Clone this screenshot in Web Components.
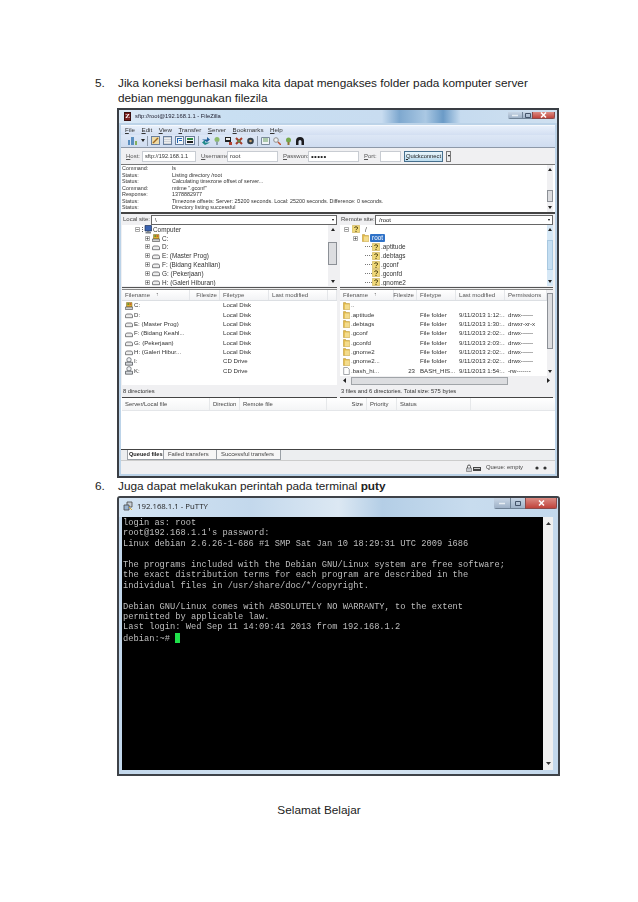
<!DOCTYPE html>
<html lang="id"><head><meta charset="utf-8"><title>Selamat Belajar</title>
<style>html,body{margin:0;background:#fff}</style>
</head><body>
<doc-page>
  <doc-item n="5.">Jika koneksi berhasil maka kita dapat mengakses folder pada komputer server<br>debian menggunakan filezila</doc-item>
  <fz-window></fz-window>
  <doc-item class="second" n="6.">Juga dapat melakukan perintah pada terminal <b>puty</b></doc-item>
  <putty-window></putty-window>
  <doc-foot>Selamat Belajar</doc-foot>
</doc-page>
<script>
const def=(name,html,extra)=>customElements.define(name,class extends HTMLElement{
  constructor(){super();this.attachShadow({mode:'open'}).innerHTML=typeof html==='function'?html(this):html;}
  connectedCallback(){ if(extra) extra(this); }
});
const ico={
 folder:`<svg width="7" height="8" viewBox="0 0 7 8"><path d="M.4.600h2.200l.6 1h3.400v6H.4z" fill="#e4bb48" stroke="#b08c30" stroke-width=".5"/><path d="M1.800 2.400h4.800v5H1.800z" fill="#f3dc8e"/></svg>`,
 qfolder:`<svg width="8" height="8" viewBox="0 0 8 8"><path d="M.3.500h7.400v7H.3z" fill="#f0d878" stroke="#c0a040" stroke-width=".5"/><path d="M2.400 2.700c.3-1.200 3.300-1.200 3.300.3 0 1.100-1.700 1-1.700 2.200M4 6v1" fill="none" stroke="#453a10" stroke-width="1"/></svg>`,
 drive:`<svg width="8" height="8" viewBox="0 0 8 8"><path d="M.5 4.300 1.500 3h5l1 1.300v2.400H.5z" fill="#ececec" stroke="#4a4c50" stroke-width=".7"/></svg>`,
 sys:`<svg width="8" height="8" viewBox="0 0 8 8"><path d="M1.500.500h5.500v4.500H1.500z" fill="#e0b030" stroke="#7a6420" stroke-width=".5"/><path d="M2.400 1.300h1.700v1.500H2.400z" fill="#3f8f3a"/><path d="M4.500 1.300h1.700v1.500H4.500z" fill="#c05030"/><path d="M.4 5h7.200v2.500H.4z" fill="#d0d0d0" stroke="#444" stroke-width=".6"/></svg>`,
 cd:`<svg width="8" height="9" viewBox="0 0 8 9"><circle cx="4" cy="2.800" r="2.200" fill="#eef0f3" stroke="#555a60" stroke-width=".7"/><path d="M.5 5.200h7v3h-7z" fill="#d5d8dc" stroke="#44474c" stroke-width=".7"/></svg>`,
 comp:`<svg width="10" height="9" viewBox="0 0 10 9"><path d="M3 .5h6.500v5.500H3z" fill="#3a62b0" stroke="#1d2f58" stroke-width=".7"/><path d="M5 6h2.500v1H9v1.500H3.500V7H5z" fill="#7d838a"/><path d="M.5 2v6" stroke="#666" stroke-width="1" stroke-dasharray="1 1"/></svg>`,
 file:`<svg width="7" height="8" viewBox="0 0 7 8"><path d="M.7.500h3.800l1.800 1.800v5.200H.7z" fill="#fff" stroke="#80848a" stroke-width=".7"/></svg>`,
 plus:`<svg width="5" height="5" viewBox="0 0 5 5"><path d="M.5.500h4v4h-4z" fill="#fff" stroke="#888" stroke-width=".7"/><path d="M1.200 2.500h2.600M2.500 1.200v2.600" stroke="#333" stroke-width=".6"/></svg>`,
 minus:`<svg width="5" height="5" viewBox="0 0 5 5"><path d="M.5.500h4v4h-4z" fill="#fff" stroke="#888" stroke-width=".7"/><path d="M1.200 2.500h2.600" stroke="#333" stroke-width=".6"/></svg>`
};

def('doc-page',`<style>:host{display:block;width:638px;height:902px;box-sizing:border-box;padding:76px 0 0 117px;font:11.800px/15.300px "Liberation Sans",Arial,sans-serif;color:#222;background:#fff;overflow:hidden}</style><slot></slot>`);
def('doc-item',h=>`<style>:host{display:block;position:relative;width:440px;margin-left:1px;height:32px;white-space:nowrap}
:host(.second){height:17px;margin-top:1px}
.n{position:absolute;left:-23px;top:0}</style><span class="n">${h.getAttribute('n')}</span><slot></slot>`);
def('doc-foot',`<style>:host{display:block;width:404px;margin-top:25px;text-align:center;line-height:19px}</style><slot></slot>`);

def('win-buttons',`<style>:host{display:flex;align-items:stretch;height:7px;overflow:hidden;border-radius:0 0 2px 2px}
i{display:flex;align-items:center;justify-content:center;width:var(--bw,16px);background:linear-gradient(#c8d6e6,#9fb2c8);border:1px solid #6f8296;box-sizing:border-box;border-top:0;margin-left:-1px}
i.m{width:var(--bm,11px)}
i.x{width:var(--bx,23px);background:linear-gradient(#dc8c84,#c0443c);border-color:#8a4a4a}
svg{display:block}</style>
<i><svg width="6" height="3"><path d="M0 1.500h6" stroke="#e8eef4" stroke-width="1.500"/></svg></i><i class="m"><svg width="6" height="5"><path d="M.5.500h5v4h-5z" fill="none" stroke="#44546a"/></svg></i><i class="x"><svg width="7" height="6"><path d="m1 .5 5 5m0-5-5 5" stroke="#fff" stroke-width="1.500"/></svg></i>`);

def('fz-title',`<style>:host{display:flex;align-items:center;height:13px;padding:0 0 0 2px;background:linear-gradient(90deg,#dbe9f6 0,#c9dff2 25%,#c8dcf0 60%,#7ea8cf 64%,#aac8e3 70%,#6b9bc7 74%,#c6dbef 78%,#cfe0f0 100%);font-size:5.800px;color:#223;margin:0 -2px 2px}
.logo{width:7px;height:9px;background:#7a1d1d;border:1px solid #3a1010;box-sizing:border-box;color:#fff;font:bold 7px/7px "Liberation Serif",serif;text-align:center;margin:0 4px 0 3px}
span{flex:1;white-space:nowrap}win-buttons{align-self:flex-start;margin:2px 2px 0 0}</style><div class="logo">Z</div><span>sftp://root@192.168.1.1 - FileZilla</span><win-buttons></win-buttons>`);

def('fz-menu',`<style>:host{display:flex;align-items:center;gap:6.500px;height:10px;padding:0 0 0 4px;background:linear-gradient(#e8f0fb,#d3dff2);border-top:1px solid #f6f9fd;box-sizing:border-box;font-size:6.200px;color:#333}
u{text-decoration:underline}</style><span><u>F</u>ile</span><span><u>E</u>dit</span><span><u>V</u>iew</span><span><u>T</u>ransfer</span><span><u>S</u>erver</span><span><u>B</u>ookmarks</span><span><u>H</u>elp</span>`);

def('fz-toolbar',`<style>:host{display:flex;align-items:center;height:13px;padding:0 0 1px 4px;box-sizing:border-box;background:linear-gradient(#dde7f6,#cfdcf0);border-bottom:1px solid #8d98a8}
:host>*{flex:none}
svg,.b{display:block;margin-left:3px}
svg:first-child{margin-left:0}
.b{width:9px;height:9px;border:1px solid #6a7f9c;box-sizing:border-box;background:#e6e6e0}
.s{display:block;width:1px;height:10px;background:#8e9aaa;margin-left:2px}</style>
<svg width="9" height="9"><path d="M0 4h2v5H0zM3 1h3v8H3z" fill="#5b8fc0"/><path d="M7 5h2v4H7z" fill="#84b060"/></svg>
<svg width="4" height="3" style="margin-left:4px"><path d="M0 0h4L2 3z" fill="#222"/></svg><span class="s"></span>
<span class="b" style="background:#eedba8"><svg width="7" height="7" style="margin:0"><path d="M1 6 6 1" stroke="#a06a20" stroke-width="1.500"/></svg></span>
<span class="b" style="background:repeating-linear-gradient(#cfd2d6 0 1px,#eceded 1px 2px)"></span>
<span class="b" style="margin-left:3px;background:#f2f4f8"><svg width="7" height="7" style="margin:0"><path d="M1 1h5v1H2v4H1z" fill="#2066b0"/><path d="M3 3h3v1H3z" fill="#2066b0"/></svg></span>
<span class="b" style="margin-left:1px;width:10px;background:#f2f4f8"><svg width="8" height="7" style="margin:0"><path d="M1 1h6v2H1z" fill="#2d8a42"/><path d="M1 4h6v2H1z" fill="#222"/></svg></span>
<span class="s" style="margin-left:3px"></span>
<svg width="8" height="8"><path d="M0 2.500h5V0l3 2.500-3 2.500z" fill="#1f5f9a"/><path d="M8 5.500H3V3L0 5.500 3 8z" fill="#1f8a8a"/></svg>
<svg width="8" height="9"><circle cx="4" cy="3.500" r="2.500" fill="#8cbc6c"/><path d="M3 5.500h2V9H3z" fill="#8da0b0"/></svg>
<svg width="8" height="8"><path d="M1 0h6v5H1z" fill="#222"/><path d="M2 1h4v2H2z" fill="#eee"/><path d="M5 5h3v3H5z" fill="#b04030"/></svg>
<svg width="8" height="8"><path d="M1 1 7 7M7 1 1 7" stroke="#a53b2a" stroke-width="2"/><circle cx="4" cy="4" r="1.600" fill="#5d8a48"/></svg>
<svg width="9" height="8"><circle cx="4.500" cy="4" r="3.300" fill="#33404c"/><circle cx="4.500" cy="4" r="1.300" fill="#c8a06a"/></svg>
<span class="s"></span>
<svg width="9" height="8"><path d="M.5.500h8v7h-8z" fill="#eef2f6" stroke="#7c8c9c"/><path d="M2 2h5M2 4h5" stroke="#6aa060"/></svg>
<svg width="8" height="8"><circle cx="3" cy="3" r="2.300" fill="#f0f0f0" stroke="#909090"/><path d="M5 5l3 3" stroke="#c05030" stroke-width="1.500"/></svg>
<svg width="7" height="8" style="margin-left:4px"><circle cx="3.500" cy="3" r="2.500" fill="#74a84c"/><path d="M2.500 5h2v3h-2z" fill="#907038"/></svg>
<svg width="8" height="8" style="margin-left:4px"><path d="M0 8V4a4 4 0 0 1 8 0v4H5.500V4.500a1.500 1.500 0 0 0-3 0V8z" fill="#1c1c20"/></svg>`);

def('fz-quick',`<style>:host{display:grid;grid-template-columns:16px 54px 31px 51px 30px 51px 21px 21px 42px 8px;align-items:center;height:17px;padding:0 0 0 5px;box-sizing:border-box;background:#f0f0f2;font-size:6px;color:#555;border-bottom:1px solid #777;white-space:nowrap}
.in{height:11px;background:#fff;border:1px solid #c8ccd2;box-sizing:border-box;display:block;line-height:9px;padding-left:2px;color:#333;overflow:hidden}
.host{font-size:5.600px}
.btn{border:1px solid #47708e;background:linear-gradient(#e9f6fc,#bbdcee);height:11px;line-height:9px;text-align:center;box-sizing:border-box;color:#222;margin-left:3px;font-size:5.800px}
.dd{height:11px;border:1px solid #777;box-sizing:border-box;margin-left:3px;width:5px;background:#eee;position:relative}
.dd:after{content:"";position:absolute;left:.5px;top:3px;border:solid transparent;border-width:2px 1px 0;border-top-color:#000}
.l{margin-left:5px}
u{text-decoration:underline}</style>
<span><u>H</u>ost:</span><span class="in host">sftp://192.168.1.1</span><span class="l"><u>U</u>sername:</span><span class="in">root</span><span class="l"><u>P</u>assword:</span><span class="in" style="letter-spacing:.3px;font-size:8px;color:#222">•••••</span><span class="l"><u>P</u>ort:</span><span class="in"></span><span class="btn"><u>Q</u>uickconnect</span><span class="dd"></span>`);

const scroll=()=>`<div class="sb"><svg width="4" height="3"><path d="M0 3 2 0 4 3z" fill="#222"/></svg><div class="th"></div><svg width="4" height="3"><path d="M0 0h4L2 3z" fill="#222"/></svg></div>`;
const sbCss=`.sb{width:6px;flex:none;background:#f0f0f2;display:flex;flex-direction:column;align-items:center;padding:3px 0;box-sizing:border-box;position:relative}.th{position:absolute;left:0;right:0;background:#dcdde0;border:1px solid #8c9096;box-sizing:border-box}.sb svg{display:block}.sb svg:last-child{margin-top:auto}`;

def('fz-log',`<style>:host{display:flex;height:49px;background:#fff;font-size:5.400px;line-height:6.500px;color:#333;border-bottom:2px solid #444;padding:0 2px 0 1px;box-sizing:border-box}
.t{flex:1;display:grid;grid-template-columns:50px 1fr;align-content:start;white-space:nowrap}
${sbCss}.th{top:25px;height:12px}</style>
<div class="t"><span>Command:</span><span>ls</span><span>Status:</span><span>Listing directory /root</span><span>Status:</span><span>Calculating timezone offset of server...</span><span>Command:</span><span>mtime ".gconf"</span><span>Response:</span><span>1378882977</span><span>Status:</span><span>Timezone offsets: Server: 25200 seconds. Local: 25200 seconds. Difference: 0 seconds.</span><span>Status:</span><span>Directory listing successful</span></div>${scroll()}`);

def('fz-sitebar',h=>`<style>:host{display:grid;grid-template-columns:var(--lab) 1fr;align-items:center;height:11px;font-size:6px;color:#444;background:#f0f0f2;white-space:nowrap}
span{padding-left:1px}
.in{background:#fff;height:10px;border:1px solid #666;box-sizing:border-box;line-height:8px;padding-left:3px;color:#222;position:relative}
.in:after{content:"";position:absolute;right:2px;top:3px;border:solid transparent;border-width:2px 1.500px 0;border-top-color:#000}</style><span>${h.getAttribute('label')}</span><span class="in">${h.getAttribute('value')}</span>`);

def('fz-tree',`<style>:host{display:flex;height:61px;background:#fff;font-size:6.400px;color:#333;overflow:hidden}
.t{flex:1;min-width:0}
.r{display:flex;align-items:center;height:8.800px;white-space:nowrap}
svg{display:block;flex:none}
${sbCss}
:host(:not([remote])) .sb{width:9px}
:host(:not([remote])) .th{top:17px;height:23px}
:host([remote]) .sb{background:#d6e8f6}
:host([remote]) .th{top:15px;height:30px;background:#c4def2;border-color:#a8c8e0}
.sel{background:#2f72c8;color:#fff;padding:0 2px;border-radius:1px;display:block;line-height:8px}
.cn{display:block;width:7px;height:0;border-top:1px dotted #777;flex:none}
#s{display:contents}</style><div class="t" id="t"></div><div id="s"></div>`,
h=>{const T=h.shadowRoot.getElementById('t');const remote=h.hasAttribute('remote');
 const cell=(pad,a,ag,b,bg,t)=>`<div class="r" style="padding-left:${pad}px">${a}<span style="width:${ag}px;flex:none"></span>${b}<span style="width:${bg}px;flex:none"></span><span>${t}</span></div>`;
 const rows=remote?[cell(4,ico.minus,3,ico.qfolder,5,'/'),cell(13,ico.plus,4,ico.folder,1,'<span class="sel">root</span>'),...['.aptitude','.debtags','.gconf','.gconfd','.gnome2'].map(n=>cell(25,'<i class="cn"></i>',0,ico.qfolder,1,n))]
 :[cell(13,ico.minus,2,ico.comp,1,'Computer'),...[[ico.sys,'C:'],[ico.drive,'D:'],[ico.drive,'E: (Master Prog)'],[ico.drive,'F: (Bidang Keahlian)'],[ico.drive,'G: (Pekerjaan)'],[ico.drive,'H: (Galeri Hiburan)']].map(a=>cell(23,ico.plus,2,a[0],2,a[1]))];
 T.innerHTML=rows.join('');
 h.shadowRoot.getElementById('s').innerHTML=scroll();
});

def('fz-list',`<style>:host{display:flex;flex-direction:column;height:95px;background:#fff;font-size:6.100px;color:#333;overflow:hidden}
.main{flex:1;display:flex;min-height:0}.c{flex:1;min-width:0}
.g{display:grid;align-items:center;white-space:nowrap}
.h{height:11px;background:linear-gradient(#fff,#f2f3f5);border-bottom:1px solid #dcdfe3;color:#555;box-sizing:border-box}
.h span{border-right:1px solid #e4e6e9;height:10px;display:flex;align-items:center;padding-left:3px;box-sizing:border-box;gap:6px}
.h .rt{justify-content:flex-end;padding-right:2px}
.h small{font-size:5px}
.rw{height:9.330px}
.rw>span{overflow:hidden;display:flex;gap:1px;align-items:center;padding-left:3px}
.rw .rt{justify-content:flex-end;padding-right:2px}
svg{display:block;flex:none}
${sbCss}.sb{background:#f0f0f2}.th{top:3px;height:56px}
#s,#hs{display:contents}
.hs{height:9px;flex:none;background:#f0f0f2;display:flex;align-items:center;padding:0 3px;box-sizing:border-box}
.hs b{display:block;height:8px;width:157px;margin:0 auto 0 5px;background:#dcdde0;border:1px solid #a0a4a8;box-sizing:border-box}
</style><div class="main"><div class="c" id="c"></div><div id="s"></div></div><div id="hs"></div>`,
h=>{const r=h.shadowRoot,remote=h.hasAttribute('remote');const C=r.getElementById('c');
 const cols=remote?'54px 23px 39px 49px 42px':'68px 30px 49px 59px 9px';
 const head=['Filename<small>↑</small>','Filesize','Filetype','Last modified',remote?'Permissions':''];
 const F=ico.folder,D=ico.drive;
 const rows=remote?[[F,'..','','','',''],[F,'.aptitude','','File folder','9/11/2013 1:12:...','drwx------'],[F,'.debtags','','File folder','9/11/2013 1:30:...','drwxr-xr-x'],[F,'.gconf','','File folder','9/11/2013 2:02:...','drwx------'],[F,'.gconfd','','File folder','9/11/2013 2:03:...','drwx------'],[F,'.gnome2','','File folder','9/11/2013 2:02:...','drwx------'],[F,'.gnome2...','','File folder','9/11/2013 2:02:...','drwx------'],[ico.file,'.bash_hi...','23','BASH_HIS...','9/11/2013 1:54:...','-rw-------']]
 :[[ico.sys,'C:','','Local Disk','',''],[D,'D:','','Local Disk','',''],[D,'E: (Master Prog)','','Local Disk','',''],[D,'F: (Bidang Keahl...','','Local Disk','',''],[D,'G: (Pekerjaan)','','Local Disk','',''],[D,'H: (Galeri Hibur...','','Local Disk','',''],[ico.cd,'I:','','CD Drive','',''],[ico.cd,'K:','','CD Drive','','']];
 C.innerHTML=`<div class="g h" style="grid-template-columns:${cols}">${head.map((t,i)=>`<span class="${i==1?'rt':''}">${t}</span>`).join('')}</div>`+
 rows.map(v=>`<div class="g rw" style="grid-template-columns:${cols}"><span>${v[0]}<span>${v[1]}</span></span><span class="rt">${v[2]}</span><span>${v[3]}</span><span>${v[4]}</span><span>${v[5]}</span></div>`).join('');
 if(remote){r.getElementById('s').innerHTML=scroll();r.getElementById('hs').innerHTML=`<div class="hs"><svg width="3" height="5"><path d="M3 0v5L0 2.500z" fill="#222"/></svg><b></b><svg width="3" height="5"><path d="M0 0v5l3-2.500z" fill="#222"/></svg></div>`}
});

def('fz-status',`<style>:host{display:block;height:13px;line-height:12px;font-size:5.800px;color:#333;background:#f0f0f2;padding-left:1px;border-bottom:1px solid #444;box-sizing:border-box;white-space:nowrap}</style><slot></slot>`);

def('fz-pane',`<style>:host{display:flex;flex-direction:column;min-width:0}
.d{height:4px;flex:none;background:linear-gradient(#f0f0f2 0 1px,#555 1px 2px,#eee 2px 3px,#888 3px)}</style><slot name="a"></slot><slot name="b"></slot><div class="d"></div><slot name="c"></slot><slot name="d"></slot>`);

def('fz-queue',`<style>:host{display:flex;flex-direction:column;background:#fff;font-size:5.900px;color:#444;white-space:nowrap}
.h{display:grid;grid-template-columns:88px 30px 87px 40px 30px 74px 1fr;height:12px;align-items:center;background:linear-gradient(#fff,#f4f5f6);border-bottom:1px solid #e4e6e9;margin-left:1px;box-sizing:content-box}
.h span{height:12px;display:flex;align-items:center;padding-left:3px;border-right:1px solid #e6e8ea;box-sizing:border-box}
.b{height:38px;border-bottom:1px solid #444}
.tabs{display:flex;align-items:flex-end;height:11px;background:#eceef0;padding-left:6px;border-bottom:1px solid #ccc;box-sizing:border-box}
.tabs span{height:10px;line-height:8px;padding-left:4px;border:1px solid #9aa0a6;border-top:0;box-sizing:border-box;background:#f6f6f6;margin-right:-1px}
.tabs .on{background:#fff;font-weight:700;color:#222;width:37px;padding-left:1px;border-width:0 1px 1px 1px;font-size:5.600px}
.st{display:flex;align-items:center;height:13px;background:#f0f0f2;padding-left:345px;box-sizing:border-box}
svg{display:block;flex:none}</style>
<div class="h"><span>Server/Local file</span><span>Direction</span><span>Remote file</span><span style="justify-content:flex-end;padding-right:3px">Size</span><span>Priority</span><span>Status</span><span style="border:0"></span></div>
<div class="b"></div>
<div class="tabs"><span class="on">Queued files</span><span style="width:54px">Failed transfers</span><span style="width:65px">Successful transfers</span></div>
<div class="st"><svg width="6" height="8"><path d="M1.500 4V2.500a1.500 1.500 0 0 1 3 0V4" fill="none" stroke="#555"/><path d="M.5 4h5v3.500h-5z" fill="#c8cbd0" stroke="#666" stroke-width=".6"/></svg><svg width="8" height="4" style="margin:2px 0 0 1px"><path d="M0 0h8v4H0z" fill="#444"/><path d="M1 1h6v1H1z" fill="#ccc"/></svg><span style="margin:0 12px 0 5px">Queue: empty</span><svg width="4" height="4"><circle cx="2" cy="2" r="1.600" fill="#333"/></svg><svg width="4" height="4" style="margin-left:4px"><circle cx="2" cy="2" r="1.600" fill="#333"/></svg></div>`);

def('fz-window',`<style>:host{display:block;width:442px;height:370px;box-sizing:border-box;border:2px solid #3a3e44;background:#bcd3e8;overflow:hidden;filter:blur(.35px);font-family:"Liberation Sans",Arial,sans-serif;line-height:1.100;padding:0 2px}
.panes{display:grid;grid-template-columns:215px 213px;gap:3px;background:#f0f0f2;padding:0 2px 0 1px}
.l{--lab:29px}.r{--lab:35px}
</style>
<fz-title></fz-title><fz-menu></fz-menu><fz-toolbar></fz-toolbar><fz-quick></fz-quick><fz-log></fz-log>
<div class="panes">
<fz-pane class="l"><fz-sitebar slot="a" label="Local site:" value="\\"></fz-sitebar><fz-tree slot="b"></fz-tree><fz-list slot="c"></fz-list><fz-status slot="d">8 directories</fz-status></fz-pane>
<fz-pane class="r"><fz-sitebar slot="a" label="Remote site:" value="/root"></fz-sitebar><fz-tree slot="b" remote></fz-tree><fz-list slot="c" remote></fz-list><fz-status slot="d">3 files and 6 directories. Total size: 575 bytes</fz-status></fz-pane>
</div>
<fz-queue></fz-queue>`);

def('putty-title',`<style>:host{display:flex;align-items:center;height:19px;padding:0 0 3px 4px;box-sizing:border-box;background:linear-gradient(90deg,#d4e4f3,#c3d8ec 30%,#dce8f3 50%,#b4cee6 60%,#c8dcee 80%,#c3d8ec);font:7.800px/1.100 "Open Sans","Liberation Sans",sans-serif;color:#222;gap:4px;--bw:18px;--bm:16px;--bx:32px}
span{flex:1;white-space:nowrap}svg{display:block}win-buttons{height:11px;align-self:flex-start;margin-right:1px}</style>
<svg width="10" height="10"><path d="M4 1h5v5H4z" fill="#c8d0d8" stroke="#444" stroke-width=".8"/><path d="M1 4h5v5H1z" fill="#9ab4d0" stroke="#444" stroke-width=".8"/><path d="M6 6 9 9" stroke="#e0b030"/></svg><span>192.168.1.1 - PuTTY</span><win-buttons></win-buttons>`);

def('putty-term',`<style>:host{display:flex;height:253px;margin-left:3px}
pre{flex:0 0 421px;margin:0;padding:1px 0 0 1px;box-sizing:border-box;background:#000;font:400 8.720px/10.440px "Liberation Mono","Courier New",monospace;color:#bebebe;white-space:pre;overflow:hidden}
.cur{display:inline-block;width:5px;height:10px;background:#1fe04a;vertical-align:-2px}
.sb{flex:0 0 10px;background:#f0f0f0;display:flex;flex-direction:column;justify-content:space-between;align-items:center;padding:5px 0;box-sizing:border-box}
svg{display:block}</style>
<pre>login as: root
root@192.168.1.1's password:
Linux debian 2.6.26-1-686 #1 SMP Sat Jan 10 18:29:31 UTC 2009 i686

The programs included with the Debian GNU/Linux system are free software;
the exact distribution terms for each program are described in the
individual files in /usr/share/doc/*/copyright.

Debian GNU/Linux comes with ABSOLUTELY NO WARRANTY, to the extent
permitted by applicable law.
Last login: Wed Sep 11 14:09:41 2013 from 192.168.1.2
debian:~# <span class="cur"></span></pre>
<div class="sb"><svg width="5" height="3"><path d="M0 3 2.500 0 5 3z" fill="#333"/></svg><svg width="5" height="3"><path d="M0 0h5L2.500 3z" fill="#333"/></svg></div>`);

def('putty-window',`<style>:host{display:block;width:443px;height:280px;box-sizing:border-box;border:2px solid #3e4248;border-radius:3px 3px 0 0;background:linear-gradient(90deg,#c3d8ec,#d8e6f2 50%,#c3d8ec);overflow:hidden;filter:blur(.3px)}</style><putty-title></putty-title><putty-term></putty-term>`);
</script>
</body></html>
